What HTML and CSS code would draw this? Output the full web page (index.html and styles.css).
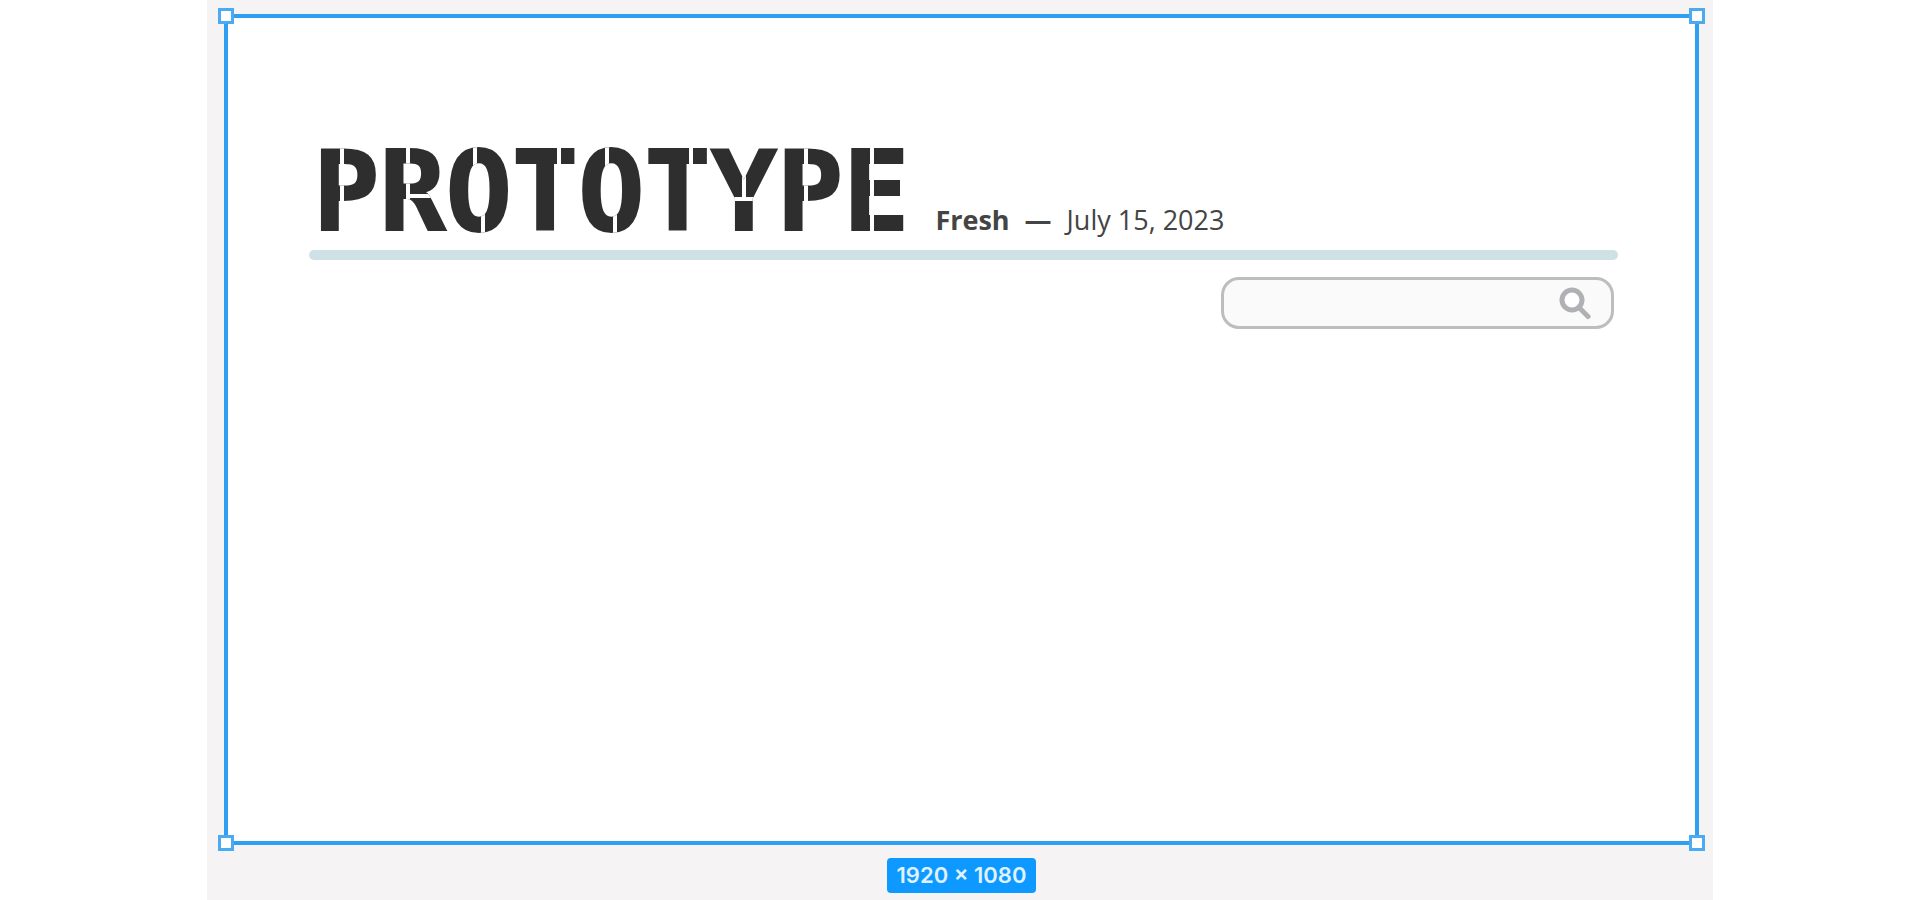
FILE: index.html
```html
<!DOCTYPE html>
<html lang="en">
<head>
<meta charset="utf-8">
<title>Prototype</title>
<link rel="stylesheet" href="styles.css">
</head>
<body>
<main class="canvas">
  <section class="frame">
    <span class="handle handle-tl"></span>
    <span class="handle handle-tr"></span>
    <span class="handle handle-bl"></span>
    <span class="handle handle-br"></span>
    <header class="masthead">
      <h1 class="title">PROTOTYPE</h1>
      <p class="issue"><strong class="edition">Fresh</strong><strong class="dash">—</strong><time datetime="2023-07-15">July 15, 2023</time></p>
    </header>
    <form class="search">
      <input class="search-input" type="search" aria-label="Search">
      <button class="search-button" type="button" aria-label="Search">
        <svg class="search-icon" viewBox="0 0 34 34" aria-hidden="true">
          <circle cx="14" cy="14" r="10"/>
          <path d="M21 21.500L30 30.500"/>
        </svg>
      </button>
    </form>
  </section>
  <div class="size">1920 × 1080</div>
</main>
</body>
</html>
```
FILE: styles.css
```css
* { box-sizing: border-box; }

body {
  margin: 0;
  background: #fff;
  font-family: "Open Sans", sans-serif;
  color: #444;
}

.canvas {
  display: flex;
  flex-direction: column;
  align-items: center;
  gap: 13px;
  min-height: 100vh;
  margin: 0 10.8%;
  padding: 14px 14px 7px 17px;
  background: #f5f3f4;
}

.frame {
  position: relative;
  flex: 1;
  align-self: stretch;
  padding: 124px 77px 0 81px;
  border: 4px solid #2f9ff2;
  background: #fff;
}

.handle {
  position: absolute;
  width: 16px;
  height: 16px;
  border: 3px solid #4baaf2;
  background: #fff;
}
.handle-tl { top: -10px; left: -10px; }
.handle-tr { top: -10px; right: -10px; }
.handle-bl { bottom: -10px; left: -10px; }
.handle-br { bottom: -10px; right: -10px; }

.masthead {
  position: relative;
  display: flex;
  align-items: baseline;
  gap: 26px;
  padding: 0 0 18px 4px;
}
.masthead::after {
  content: "";
  position: absolute;
  inset: auto 0 0;
  height: 10px;
  border-radius: 5px;
  background: #cee1e4;
}

/* Stencil lettering: white bridges are cut through the dark letter fill. */
.title {
  --cut: linear-gradient(#fff, #fff);
  margin: 0;
  font: bold 110px/100px "DejaVu Sans Mono", monospace;
  color: transparent;
  -webkit-text-stroke: 2px transparent;
  background:
    var(--cut) 27px 0 / 4px 100%,
    var(--cut) 93px 0 / 4px 100%,
    var(--cut) 97px 52px / 36px 4px,
    var(--cut) 160px 0 / 4px 50px,
    var(--cut) 168px 50px / 4px 50px,
    var(--cut) 244px 0 / 4px 100%,
    var(--cut) 292px 0 / 4px 50px,
    var(--cut) 300px 50px / 4px 50px,
    var(--cut) 376px 0 / 4px 100%,
    var(--cut) 429px 0 / 4px 55px,
    var(--cut) 398px 55px / 64px 4px,
    var(--cut) 491px 0 / 4px 100%,
    var(--cut) 557px 0 / 4px 100%,
    linear-gradient(#2e2e2e, #2e2e2e);
  background-repeat: no-repeat;
  -webkit-background-clip: text;
  background-clip: text;
}

.issue {
  display: flex;
  gap: 15px;
  margin: 0;
  font-size: 27px;
  line-height: 36px;
}
.edition, .dash { font-weight: 700; }

.search {
  display: flex;
  align-items: center;
  width: 30%;
  height: 52px;
  margin: 17px 4px 0 auto;
  border: 3px solid #bdbdbd;
  border-radius: 18px;
  background: #fafafa;
}
.search-input {
  flex: 1;
  min-width: 0;
  height: 100%;
  padding: 0 16px;
  border: 0;
  outline: 0;
  background: transparent;
  font: 24px "Open Sans", sans-serif;
}
.search-button {
  display: flex;
  padding: 0 19px 0 0;
  border: 0;
  background: transparent;
}
.search-icon {
  width: 34px;
  height: 34px;
  fill: none;
  stroke: #afb1b5;
  stroke-width: 5;
  stroke-linecap: round;
}
.search-icon circle { fill: #fff; }

.size {
  padding: 0 10px;
  border-radius: 4px;
  background: #0d99ff;
  color: #e0f2ff;
  font: 600 22px/35px Inter, sans-serif;
}
```
